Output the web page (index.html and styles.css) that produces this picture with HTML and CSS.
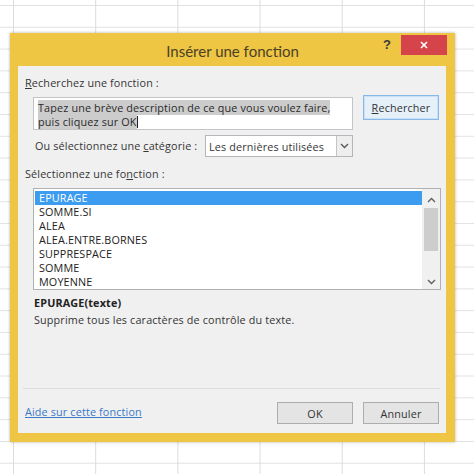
FILE: index.html
```html
<!DOCTYPE html>
<html lang="fr">
<head>
<meta charset="utf-8">
<title>Insérer une fonction</title>
<link rel="stylesheet" href="styles.css">
</head>
<body>
<div class="dialog">
  <div class="titlebar">
    <div></div>
    <div class="title">Insérer une fonction</div>
    <div class="controls">
      <span class="help">?</span>
      <span class="close">
        <svg width="10" height="10" viewBox="0 0 10 10"><path d="M2 2 L8 8 M8 2 L2 8" stroke="#fff" stroke-width="1.6" fill="none"/></svg>
      </span>
    </div>
  </div>
  <div class="panel">
    <div class="label"><u>R</u>echerchez une fonction :</div>
    <div class="search-row">
      <div class="textbox">
        <div class="tline"><span class="sel">Tapez une brève description de ce que vous voulez faire,</span></div>
        <div class="tline"><span class="sel">puis cliquez sur OK</span><span class="caret"></span></div>
      </div>
      <div class="btn btn-focus"><u>R</u>echercher</div>
    </div>
    <div class="cat-row">
      <div class="label">Ou sélectionnez une <u>c</u>atégorie :</div>
      <div class="select">
        <span class="select-text">Les dernières utilisées</span>
        <span class="select-btn">
          <svg width="9" height="6" viewBox="0 0 9 6"><path d="M1 1 L4.5 4.5 L8 1" stroke="#555" stroke-width="1.3" fill="none"/></svg>
        </span>
      </div>
    </div>
    <div class="label label-list">Sélectionnez une fo<u>n</u>ction :</div>
    <div class="listbox">
      <div class="items">
        <div class="item active">EPURAGE</div>
        <div class="item">SOMME.SI</div>
        <div class="item">ALEA</div>
        <div class="item">ALEA.ENTRE.BORNES</div>
        <div class="item">SUPPRESPACE</div>
        <div class="item">SOMME</div>
        <div class="item">MOYENNE</div>
      </div>
      <div class="scrollbar">
        <svg class="arrow" width="9" height="6" viewBox="0 0 9 6"><path d="M1 5 L4.5 1.5 L8 5" stroke="#606060" stroke-width="1.4" fill="none"/></svg>
        <div class="thumb"></div>
        <div class="track"></div>
        <svg class="arrow" width="9" height="6" viewBox="0 0 9 6"><path d="M1 1 L4.5 4.5 L8 1" stroke="#606060" stroke-width="1.4" fill="none"/></svg>
      </div>
    </div>
    <div class="fn-sig">EPURAGE(texte)</div>
    <div class="fn-desc">Supprime tous les caractères de contrôle du texte.</div>
    <div class="separator"></div>
    <div class="bottom-row">
      <a class="link" href="#">Aide sur cette fonction</a>
      <div class="buttons">
        <div class="btn">OK</div>
        <div class="btn">Annuler</div>
      </div>
    </div>
  </div>
</div>
</body>
</html>
```

FILE: styles.css
```css
html, body {
  margin: 0;
  padding: 0;
}
body {
  width: 474px;
  height: 474px;
  box-sizing: border-box;
  padding: 33px 0 0 10px;
  background-color: #ffffff;
  background-image:
    linear-gradient(to right, #dcdcdc 1px, transparent 1px),
    linear-gradient(to bottom, #e2e2e2 1px, transparent 1px);
  background-size: 82.2px 100%, 100% 21.8px;
  background-position: 13px 0, 0 5px;
  font-family: "Open Sans", "Noto Sans", sans-serif;
  font-size: 10.8px;
  letter-spacing: 0.15px;
  color: #353535;
  overflow: hidden;
}
.dialog {
  width: 445px;
  height: 409px;
  box-sizing: border-box;
  background: #eec643;
  padding: 0 9px 9px 8px;
  box-shadow: 0 0 3px rgba(0, 0, 0, 0.3);
  display: flex;
  flex-direction: column;
}
.titlebar {
  height: 33px;
  display: grid;
  grid-template-columns: 1fr auto 1fr;
  align-items: start;
  margin: 0 -9px 0 -8px;
}
.title {
  font-family: Lato, "Open Sans", sans-serif;
  font-size: 15px;
  letter-spacing: 0;
  color: #4a4128;
  padding-top: 9px;
  line-height: 18px;
}
.controls {
  display: flex;
  justify-content: flex-end;
  align-items: flex-start;
  padding-right: 8px;
  padding-top: 2px;
}
.help {
  font-family: "Liberation Sans", sans-serif;
  font-weight: bold;
  font-size: 13px;
  color: #3a3a3a;
  line-height: 20px;
  margin-right: 10px;
}
.close {
  width: 46px;
  height: 20px;
  background: #d5444a;
  display: flex;
  align-items: center;
  justify-content: center;
}
.panel {
  flex: 1;
  background: #f0f0f0;
  padding: 10px 7px 0 7px;
  display: flex;
  flex-direction: column;
}
.label {
  line-height: 14px;
  height: 14px;
  white-space: nowrap;
}
.search-row {
  display: flex;
  align-items: flex-start;
  margin-top: 5px;
  padding-left: 8px;
  gap: 10px;
}
.textbox {
  width: 320px;
  height: 33px;
  box-sizing: border-box;
  margin-top: 2px;
  background: #fff;
  border: 1px solid #c2c4c8;
  padding: 3px 4px 0 4px;
  color: #2a2a2a;
  white-space: nowrap;
}
.tline {
  height: 14px;
  line-height: 14px;
}
.sel {
  background: #cccccc;
}
.caret {
  display: inline-block;
  width: 1px;
  height: 12px;
  background: #222;
  vertical-align: -2px;
}
.btn {
  width: 76px;
  height: 22px;
  box-sizing: border-box;
  border: 1px solid #adadad;
  background: #e4e4e4;
  display: flex;
  align-items: center;
  justify-content: center;
  color: #333;
}
.btn-focus {
  height: 25px;
  border-color: #86b9e8;
  background: #e6f0f9;
  box-shadow: inset 0 0 0 1px #c9e0f5;
}
.cat-row {
  display: flex;
  align-items: center;
  margin-top: 5px;
  padding-left: 10px;
  width: 318px;
}
.select {
  margin-left: auto;
  width: 148px;
  height: 22px;
  box-sizing: border-box;
  border: 1px solid #b4b6ba;
  background: #fff;
  display: flex;
  align-items: stretch;
}
.select-text {
  flex: 1;
  padding-left: 3px;
  display: flex;
  align-items: center;
  white-space: nowrap;
}
.select-btn {
  width: 15px;
  border-left: 1px solid #c4c4c4;
  background: #eeeeee;
  display: flex;
  align-items: center;
  justify-content: center;
}
.label-list {
  margin-top: 10px;
}
.listbox {
  margin-top: 7px;
  margin-left: 8px;
  width: 408px;
  height: 102px;
  box-sizing: border-box;
  border: 1px solid #aeb0b4;
  background: #fff;
  display: flex;
  padding: 2px 0 0 1px;
}
.items {
  flex: 1;
}
.item {
  height: 14px;
  line-height: 14px;
  padding-left: 4px;
  color: #222;
}
.item.active {
  background: #3c9cf0;
  color: #fff;
}
.scrollbar {
  width: 18px;
  margin-top: -2px;
  background: #f0f0f0;
  display: flex;
  flex-direction: column;
  align-items: center;
  padding: 8px 0 4px 0;
  box-sizing: border-box;
}
.arrow {
  flex: none;
}
.thumb {
  width: 14px;
  height: 43px;
  margin-top: 5px;
  background: #cdcdcd;
}
.track {
  flex: 1;
}
.fn-sig {
  margin-top: 6px;
  margin-left: 9px;
  font-weight: bold;
  line-height: 14px;
  color: #222;
}
.fn-desc {
  margin-top: 3px;
  margin-left: 9px;
  line-height: 14px;
}
.separator {
  margin-top: 61px;
  margin-left: -2px;
  width: 417px;
  height: 1px;
  background: #dcdcdc;
}
.bottom-row {
  margin-top: 13px;
  display: flex;
  align-items: center;
}
.link {
  color: #3a78c8;
  text-decoration: underline;
  margin-top: -4px;
}
.buttons {
  margin-left: auto;
  display: flex;
  gap: 10px;
}
```
